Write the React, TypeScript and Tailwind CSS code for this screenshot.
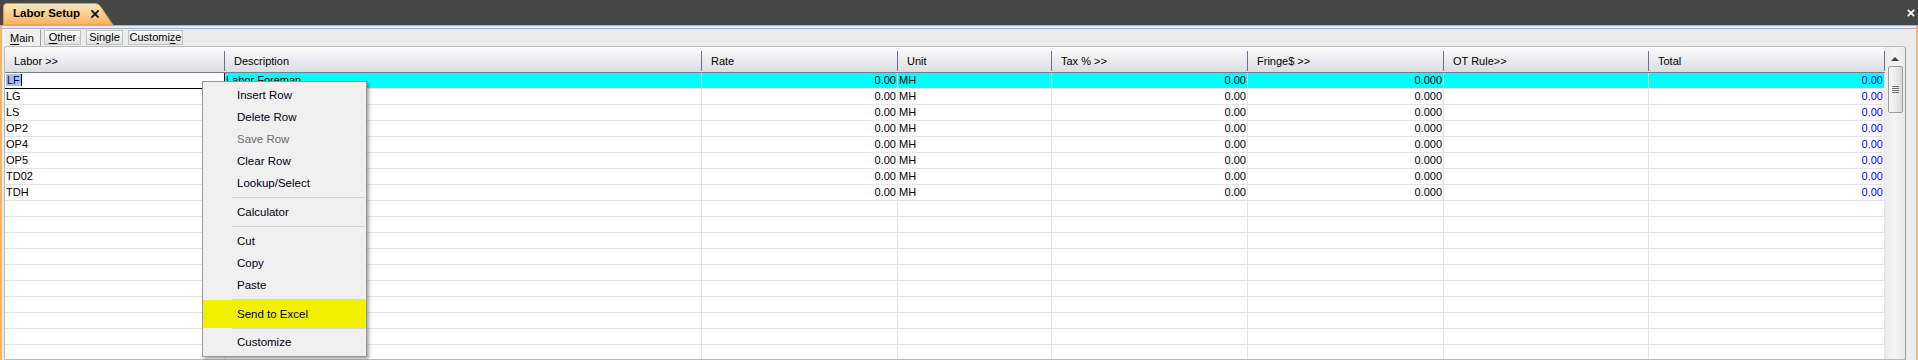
import React from "react";

type Row = {
  labor: string;
  desc: string;
  rate: string;
  unit: string;
  tax: string;
  fringe: string;
  ot: string;
  total: string;
};

const filled: Row[] = ["LF", "LG", "LS", "OP2", "OP4", "OP5", "TD02", "TDH"].map((l, i) => ({
  labor: l,
  desc: i === 0 ? "Labor Foreman" : "",
  rate: "0.00",
  unit: "MH",
  tax: "0.00",
  fringe: "0.000",
  ot: "",
  total: "0.00",
}));

const empty: Row[] = Array.from({ length: 10 }, () => ({
  labor: "",
  desc: "",
  rate: "",
  unit: "",
  tax: "",
  fringe: "",
  ot: "",
  total: "",
}));

const rows = [...filled, ...empty];

const headers = ["Labor >>", "Description", "Rate", "Unit", "Tax % >>", "Fringe$ >>", "OT Rule>>", "Total"];

const gridCols = "grid grid-cols-[220px_477px_196px_154px_196px_196px_205px_236px]";

const cellBase =
  "h-[16px] border-r border-b border-[#e4e4e4] leading-[15px] whitespace-nowrap overflow-hidden text-[11px] text-black";

function Cell({ children, right, className = "" }: { children?: React.ReactNode; right?: boolean; className?: string }) {
  return (
    <div className={`${cellBase} ${right ? "text-right pr-[1px] pl-[2px]" : "pl-[1px] pr-[2px]"} ${className}`}>
      {children}
    </div>
  );
}

function MenuItem({ label, disabled }: { label: string; disabled?: boolean }) {
  return (
    <div
      className={`h-[22px] pl-[34px] pt-[2px] flex items-center text-[11.5px] ${
        disabled ? "text-[#6d6d6d]" : "text-[#000010]"
      }`}
    >
      {label}
    </div>
  );
}

function MenuSep() {
  return (
    <div className="h-[7px] flex items-center pl-[29px] pr-[1px]">
      <div className="h-px w-full bg-[#d4d4d4]" />
    </div>
  );
}

export default function App() {
  return (
    <div
      className="relative w-[1918px] h-[360px] overflow-hidden bg-[#ececec] flex flex-col"
      style={{ fontFamily: '"Liberation Sans", Arial, sans-serif' }}
    >
      {/* Top bar */}
      <div className="h-[25px] bg-[#474747] flex items-start justify-between shrink-0">
        <div className="relative ml-[3px] mt-[3px] w-[111px] h-[22px]">
          <svg className="absolute inset-0" width="111" height="22" viewBox="0 0 111 22">
            <defs>
              <linearGradient id="tabg" x1="0" y1="0" x2="0" y2="1">
                <stop offset="0" stopColor="#fee6bb" />
                <stop offset="0.5" stopColor="#fbcf8a" />
                <stop offset="1" stopColor="#f6b25c" />
              </linearGradient>
            </defs>
            <path
              d="M0.5,22 L0.5,4 Q0.5,0.5 4,0.5 L92,0.5 Q95.5,0.5 97.5,3.5 L110,22 Z"
              fill="url(#tabg)"
              stroke="#d99a4c"
              strokeWidth="1"
            />
          </svg>
          <div className="relative flex items-center h-[22px] pl-[10px]">
            <span className="font-bold text-[11.5px] text-black leading-none">Labor Setup</span>
            <svg className="ml-[11px]" width="8" height="8" viewBox="0 0 8 8">
              <path d="M1,1 L7,7 M7,1 L1,7" stroke="#111" strokeWidth="1.9" strokeLinecap="square" />
            </svg>
          </div>
        </div>
        <svg className="mr-[3px] mt-[9px]" width="8" height="8" viewBox="0 0 8 8">
          <path d="M0.8,0.8 L7.2,7.2 M7.2,0.8 L0.8,7.2" stroke="#ffffff" strokeWidth="1.7" />
        </svg>
      </div>
      <div className="h-px bg-[#f1a84e] shrink-0" />

      {/* Panel */}
      <div className="flex-1 flex flex-col border-x-2 border-[#f4b46c] min-h-0">
        <div className="h-[2px] shrink-0" />
        <div className="h-px bg-[#a9aec6] shrink-0" />
        {/* Sub tabs */}
        <div className="h-[17px] flex items-start pl-[1px] text-[11px] text-black shrink-0">
          <div className="w-[38px] h-[17px] border-l border-t border-white border-r border-r-[#9c9c9c] bg-[#efefef] flex items-start justify-center pt-[1px] leading-[14px]">
            <span>
              <span className="underline underline-offset-2">M</span>ain
            </span>
          </div>
          <div className="ml-[3px] mt-[1px] w-[37px] h-[15px] border border-[#c2c2c2] bg-linear-to-b from-[#fafafa] to-[#e3e3e3] flex items-center justify-center leading-[13px]">
            <span>
              <span className="underline underline-offset-2">O</span>ther
            </span>
          </div>
          <div className="ml-[5px] mt-[1px] w-[37px] h-[15px] border border-[#c2c2c2] bg-linear-to-b from-[#fafafa] to-[#e3e3e3] flex items-center justify-center leading-[13px]">
            <span>
              S<span className="underline underline-offset-2">i</span>ngle
            </span>
          </div>
          <div className="ml-[5px] mt-[1px] w-[55px] h-[15px] border border-[#c2c2c2] bg-linear-to-b from-[#fafafa] to-[#e3e3e3] flex items-center justify-center leading-[13px]">
            <span>
              Customi<span className="underline underline-offset-2">z</span>e
            </span>
          </div>
        </div>

        {/* Grid */}
        <div className="ml-[2px] w-[1902px] flex-1 min-h-0 border border-[#b9b9b9] border-r-[#9a9a9a] rounded-t-[4px] bg-white flex overflow-hidden">
          <div className="w-[1880px] flex flex-col">
            {/* Header */}
            <div className={`${gridCols} h-[26px] border-b border-[#7c7c86] bg-linear-to-b from-[#fdfdfd] to-[#dcdde2] shrink-0`}>
              {headers.map((h) => (
                <div key={h} className="flex h-[25px]">
                  <div className="flex-1 pl-[9px] pt-[4px] flex items-center text-[11px] text-black whitespace-nowrap">
                    {h}
                  </div>
                  <div className="w-px mt-[4px] mb-[1px] bg-[#6f6f93]" />
                </div>
              ))}
            </div>
            {/* Rows */}
            <div className="flex flex-col">
              {rows.map((r, i) => {
                const sel = i === 0;
                const bg = sel ? "bg-[#00ffff]" : "bg-white";
                return (
                  <div key={i} className={gridCols}>
                    {sel ? (
                      <div className="h-[16px] border-r border-b border-black bg-white pl-[1px] flex items-start text-[11px] leading-[15px] overflow-hidden">
                        <span className="mt-[1px] h-[12px] bg-[#a6c2e6] text-[#00004a] leading-[12px] px-[1px]">LF</span>
                        <span className="mt-[1px] w-px h-[12px] bg-black" />
                      </div>
                    ) : (
                      <Cell className={bg}>{r.labor}</Cell>
                    )}
                    <Cell className={bg}>{r.desc}</Cell>
                    <Cell right className={bg}>{r.rate}</Cell>
                    <Cell className={bg}>{r.unit}</Cell>
                    <Cell right className={bg}>{r.tax}</Cell>
                    <Cell right className={bg}>{r.fringe}</Cell>
                    <Cell className={bg}>{r.ot}</Cell>
                    <Cell right className={`${bg} !text-[#0000ff]`}>{r.total}</Cell>
                  </div>
                );
              })}
            </div>
          </div>
          {/* Scrollbar */}
          <div className="w-[20px] bg-linear-to-r from-[#ececec] via-[#f4f4f4] to-[#e9e9e9] flex flex-col items-start">
            <div className="h-[19px] w-full flex justify-center pt-[10px]">
              <svg width="8" height="4" viewBox="0 0 8 4">
                <path d="M0,4 L4,0 L8,4 Z" fill="#404040" />
              </svg>
            </div>
            <div className="ml-[3px] w-[15px] h-[47px] rounded-[2px] border border-[#9d9d9d] bg-linear-to-r from-[#f6f6f6] via-[#ececec] to-[#d9d9d9] flex flex-col items-center justify-center gap-[1px]">
              <div className="w-[7px] h-px bg-[#707070]" />
              <div className="w-[7px] h-px bg-[#707070]" />
              <div className="w-[7px] h-px bg-[#707070]" />
              <div className="w-[7px] h-px bg-[#707070]" />
            </div>
          </div>
        </div>
      </div>

      {/* Context menu */}
      <div
        className="absolute left-[202px] top-[81px] w-[165px] h-[276px] border border-[#979797] bg-[#f0f0f0] shadow-[2px_2px_3px_rgba(0,0,0,0.35)] pt-[2px]"
        style={{ fontFamily: '"Liberation Sans", Arial, sans-serif' }}
      >
        <MenuItem label="Insert Row" />
        <MenuItem label="Delete Row" />
        <MenuItem label="Save Row" disabled />
        <MenuItem label="Clear Row" />
        <MenuItem label="Lookup/Select" />
        <MenuSep />
        <MenuItem label="Calculator" />
        <MenuSep />
        <MenuItem label="Cut" />
        <MenuItem label="Copy" />
        <MenuItem label="Paste" />
        <div className="h-[3px]" />
        <div className="h-px ml-[29px] mr-[1px] bg-[#d4d4d4]" />
        <div className="h-[28px] bg-[#f2f000] pl-[34px] pt-[1px] flex items-center text-[11.5px] text-[#000010]">
          Send to Excel
        </div>
        <div className="h-px ml-[29px] mr-[1px] bg-[#d4d4d4]" />
        <div className="h-[2px]" />
        <MenuItem label="Customize" />
      </div>
    </div>
  );
}
